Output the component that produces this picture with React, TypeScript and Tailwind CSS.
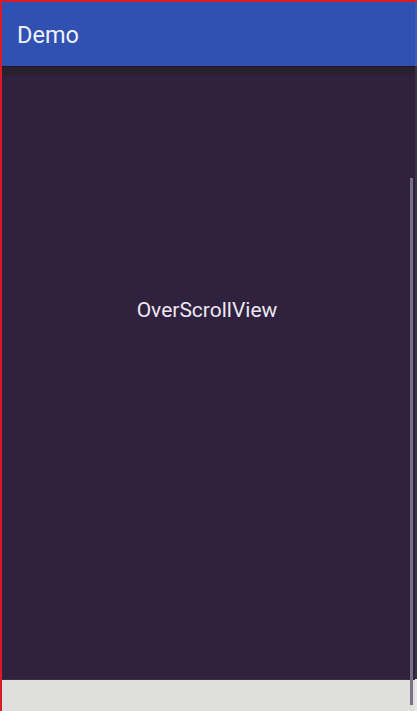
import React from "react";

export default function App() {
  return (
    <div className="w-[417px] h-[711px] flex flex-col bg-[#d81b26] pt-[2px] pl-[2px] overflow-hidden" style={{ fontFamily: "Roboto, 'Noto Sans', sans-serif" }}>
      <div className="flex-1 flex flex-row min-h-0">
        <div className="flex-1 flex flex-col min-w-0 relative">
          <div className="h-[64px] shrink-0 bg-[#3051b1] flex items-center pl-[15px] pr-4 pt-[3px]">
            <span className="text-[23.5px] text-[#eef0fa] leading-none">Demo</span>
          </div>
          <div className="h-[10px] shrink-0 bg-[#2b1f30] border-t border-[#1e1628]" />
          <div className="flex-1 bg-[#30213f] flex items-center justify-center pb-[134px] pr-[3px]">
            <span className="text-[21px] text-[#ece8f0] leading-none">OverScrollView</span>
          </div>
          <div className="h-[32px] shrink-0 bg-[#dfdfde] border-t border-[#3a3045]" />
          <div className="absolute right-[2px] top-[176px] bottom-[6px] w-[3px] bg-[#7a7085]" />
        </div>
        <div className="w-[2px] shrink-0 bg-[#3a3048] flex flex-col">
          <div className="h-[64px] bg-[#3a5ab8]" />
          <div className="flex-1" />
          <div className="h-[32px] bg-[#e8e8e8]" />
        </div>
      </div>
    </div>
  );
}
